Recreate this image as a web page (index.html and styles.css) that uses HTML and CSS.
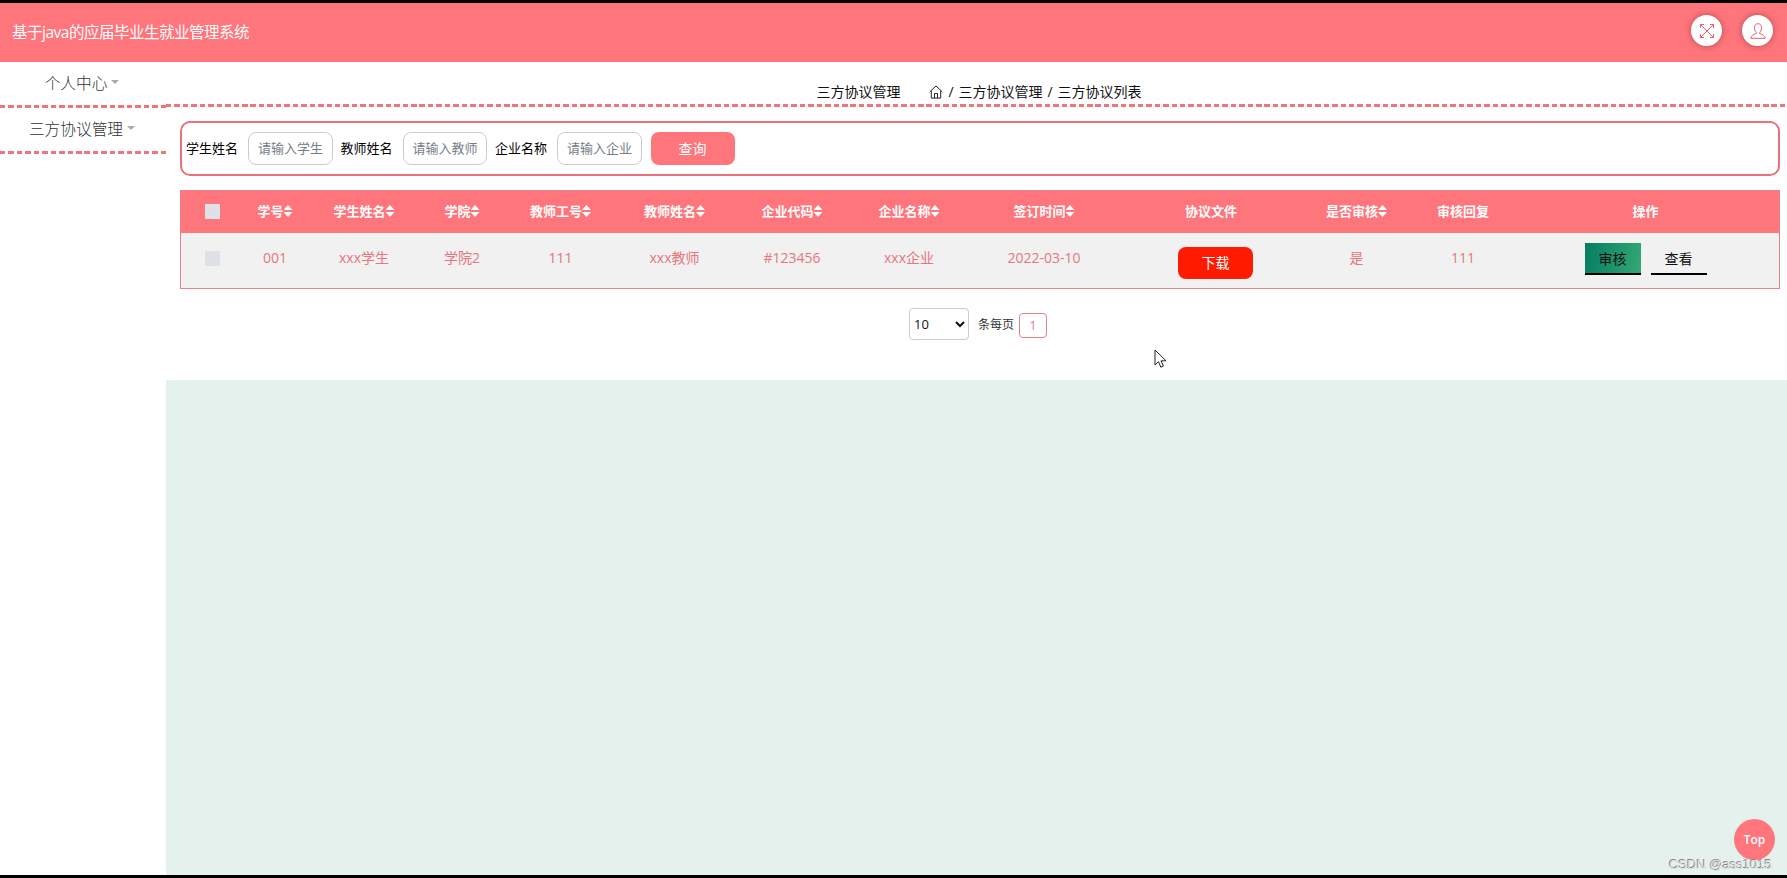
FILE: index.html
```html
<!DOCTYPE html>
<html lang="zh">
<head>
  <meta charset="utf-8">
  <title>三方协议管理</title>
  <link rel="stylesheet" href="styles.css">
</head>
<body>
  <header class="navbar">
    <div class="brand">基于java的应届毕业生就业管理系统</div>
    <div class="nav-icons">
      <a class="nav-icon">
        <svg width="16" height="16" viewBox="0 0 16 16"><path d="M1.5 1.5l13 13M14.5 1.5l-13 13M1.5 5V1.500H5M11 1.500h3.500V5M1.500 11v3.500H5M11 14.500h3.500V11"/></svg>
      </a>
      <a class="nav-icon">
        <svg width="16" height="16" viewBox="0 0 16 16"><path d="M6.300 9.500C4.800 8 4.400 6 4.500 4.300 4.600 2 6 .7 8 .7s3.400 1.300 3.500 3.600c.1 1.700-.3 3.700-1.800 5.200v1.100c2.500.8 5 1.700 5.700 4.700H.6c.7-3 3.200-3.900 5.700-4.700z"/></svg>
      </a>
    </div>
  </header>

  <div class="wrapper">
    <!-- Sidebar -->
    <nav class="sidebar">
      <a class="menu-item">个人中心<span class="caret"></span></a>
      <a class="menu-item">三方协议管理<span class="caret"></span></a>
    </nav>

    <main class="content">
      <div class="panel">
        <div class="breadcrumb">
          <span class="page-title">三方协议管理</span>
          <svg class="home" width="14" height="14" viewBox="0 0 14 14"><path d="M.6 7L7 .9 13.400 7M2.300 5.800v7.300h9.400V5.800M5.500 13V8.500h3V13"/></svg>
          <span class="crumbs">/ 三方协议管理 / 三方协议列表</span>
        </div>

        <!-- Search form -->
        <form class="search-form">
          <label for="student">学生姓名</label>
          <input type="text" id="student" placeholder="请输入学生姓名">
          <label for="teacher">教师姓名</label>
          <input type="text" id="teacher" placeholder="请输入教师姓名">
          <label for="company">企业名称</label>
          <input type="text" id="company" placeholder="请输入企业名称">
          <button type="button">查询</button>
        </form>

        <!-- Data table -->
        <table class="data-table">
          <colgroup>
            <col class="c-check"><col class="c-no"><col class="c-student"><col class="c-college">
            <col class="c-tno"><col class="c-teacher"><col class="c-code"><col class="c-company">
            <col class="c-time"><col class="c-file"><col class="c-audit"><col class="c-reply"><col class="c-action">
          </colgroup>
          <thead>
            <tr>
              <th><span class="check"></span></th>
              <th>学号<i class="sort"></i></th>
              <th>学生姓名<i class="sort"></i></th>
              <th>学院<i class="sort"></i></th>
              <th>教师工号<i class="sort"></i></th>
              <th>教师姓名<i class="sort"></i></th>
              <th>企业代码<i class="sort"></i></th>
              <th>企业名称<i class="sort"></i></th>
              <th>签订时间<i class="sort"></i></th>
              <th>协议文件</th>
              <th>是否审核<i class="sort"></i></th>
              <th>审核回复</th>
              <th>操作</th>
            </tr>
          </thead>
          <tbody>
            <tr>
              <td><span class="check"></span></td>
              <td>001</td>
              <td>xxx学生</td>
              <td>学院2</td>
              <td>111</td>
              <td>xxx教师</td>
              <td>#123456</td>
              <td>xxx企业</td>
              <td>2022-03-10</td>
              <td><button class="btn-download">下载</button></td>
              <td>是</td>
              <td>111</td>
              <td><div class="actions"><button class="btn-audit">审核</button><button class="btn-view">查看</button></div></td>
            </tr>
          </tbody>
        </table>

        <div class="pager">
          <select>
            <option>10</option>
            <option>25</option>
            <option>50</option>
          </select>
          <span class="pager-text">条每页</span>
          <a class="page-link">1</a>
        </div>
      </div>
    </main>
  </div>

  <a class="back-top">Top</a>
  <div class="watermark">CSDN @ass1015</div>
  <svg class="cursor" width="13" height="20" viewBox="0 0 13 20"><path d="M1 1v15l3.500-3.300 2.300 5.500 2.600-1.100L7.100 11.800H12z"/></svg>
</body>
</html>
```
FILE: styles.css
```css
* {
  box-sizing: border-box;
}

body {
  margin: 0;
  height: 878px;
  padding: 3px 0;
  background: #000;
  display: flex;
  flex-direction: column;
  overflow: hidden;
  font-family: "Open Sans", "Noto Sans CJK SC", sans-serif;
  font-size: 14px;
  color: #222;
}

button,
input,
select {
  font-family: inherit;
}

.navbar {
  height: 59px;
  flex: none;
  background: #ff757c;
  display: flex;
  justify-content: space-between;
  padding: 0 14px 0 12px;
}

.brand {
  color: #fff;
  font-size: 15.5px;
  letter-spacing: -.5px;
  line-height: 59px;
}

.nav-icons {
  display: flex;
  gap: 20px;
  padding-top: 12px;
}

.nav-icon {
  width: 31px;
  height: 31px;
  border-radius: 50%;
  background: #fff;
  display: flex;
  align-items: center;
  justify-content: center;
  box-shadow: 0 0 6px rgba(90, 40, 40, .5);
}

.nav-icon svg {
  fill: none;
  stroke: #e5656c;
  stroke-width: 1;
}

.wrapper {
  flex: 1;
  display: flex;
}

.sidebar {
  width: 166px;
  background: #fff;
}

.menu-item {
  height: 46px;
  display: flex;
  justify-content: center;
  align-items: center;
  padding-bottom: 5px;
  font-size: 15.7px;
  font-weight: 300;
  color: #333;
  background: repeating-linear-gradient(90deg, #f0747b 0 5.500px, transparent 5.500px 8.450px) 0 100% / 100% 3px no-repeat;
}

.menu-item .caret {
  margin: 0 2px 2px 4px;
}

.caret {
  border: 4.500px solid transparent;
  border-top-color: #aaa;
  border-bottom: 0;
}

.content {
  flex: 1;
  background: #e4f1ec;
}

.panel {
  height: 318px;
  background: #fff;
}

.breadcrumb {
  height: 45px;
  display: flex;
  justify-content: center;
  align-items: center;
  padding: 14px 0 0 5px;
  line-height: 20px;
  color: #111;
  background: repeating-linear-gradient(90deg, #f0747b 0 5.500px, transparent 5.500px 8.450px) 0 100% / 100% 3px no-repeat;
}

.page-title {
  margin-right: 29px;
}

.crumbs {
  word-spacing: 1.300px;
}

.home {
  fill: none;
  stroke: #222;
  margin-right: 5px;
}

.search-form {
  height: 55px;
  margin: 14px 7px 0 14px;
  border: 2px solid #e8717a;
  border-radius: 10px;
  display: flex;
  align-items: center;
  padding: 0 4px;
}

.search-form label {
  width: 52px;
  font-size: 13px;
  line-height: 18px;
  padding-bottom: 1px;
  color: #000;
  white-space: nowrap;
}

.search-form input {
  width: 84.500px;
  height: 33px;
  margin: 0 8px 0 10px;
  padding: 0 9px 1px;
  border: 1px solid #ccc;
  border-radius: 8px;
  font-size: 13px;
  color: #333;
}

.search-form input::placeholder {
  color: #757e87;
}

.search-form button {
  width: 84px;
  height: 33px;
  padding-bottom: 3px;
  margin-left: 1px;
  border: 0;
  border-radius: 8px;
  background: #ff757c;
  color: #fff;
  font-size: 14px;
}

.data-table {
  width: 1600px;
  margin: 14px 7px 0 14px;
  table-layout: fixed;
  border-collapse: separate;
  border-spacing: 0;
  border: 1px solid #ec8087;
  text-align: center;
}

.c-check { width: 62px; }
.c-no { width: 64px; }
.c-student { width: 114px; }
.c-college { width: 82px; }
.c-tno { width: 115px; }
.c-teacher { width: 113px; }
.c-code { width: 122px; }
.c-company { width: 112px; }
.c-time { width: 158px; }
.c-file { width: 176px; }
.c-audit { width: 115px; }
.c-reply { width: 98px; }

.data-table th {
  height: 42px;
  padding: 0 0 2px;
  background: #ff757c;
  color: #fff;
  font-size: 13px;
  line-height: 20px;
  font-weight: bold;
  white-space: nowrap;
}

.data-table td {
  height: 55px;
  padding: 14px 0 0;
  background: #f1f1f1;
  color: #e8757d;
  font-size: 14px;
  line-height: 22px;
  vertical-align: top;
}

.check {
  display: block;
  width: 15px;
  height: 15px;
  margin: 0 auto;
  background: #dee2e6;
}

td .check {
  margin-top: 4px;
}

.sort {
  display: inline-block;
  width: 9px;
  height: 12px;
  vertical-align: -1px;
  background: #fff;
  clip-path: polygon(50% 0, 100% 42%, 0 42%, 0 58%, 100% 58%, 50% 100%, 0 58%, 0 42%);
}

.btn-download {
  display: block;
  width: 75px;
  height: 32px;
  margin: 0 0 0 55px;
  padding-bottom: 3px;
  border: 0;
  border-radius: 8px;
  background: #ff1a00;
  color: #fff;
  font-size: 14px;
}

.actions {
  display: flex;
  justify-content: center;
  gap: 10px;
  margin-top: -4px;
}

.actions button {
  width: 56px;
  height: 32px;
  padding: 0;
  border: 0;
  border-bottom: 2px solid #000;
  background: none;
  color: #111;
  font-size: 14px;
}

.actions .btn-audit {
  background: linear-gradient(100deg, #047d62, #34a874);
}

.pager {
  display: flex;
  justify-content: center;
  align-items: center;
  margin-top: 19px;
  padding-left: 3px;
}

.pager select {
  width: 60px;
  height: 32px;
  border: 1px solid #ccc;
  border-radius: 4px;
  background-color: #fff;
  color: #111;
  font-size: 13px;
}

.pager-text {
  margin: 0 5px 0 9px;
  font-size: 12px;
  color: #333;
}

.page-link {
  width: 28px;
  height: 25px;
  margin-top: 2px;
  border: 1.500px solid #e5828a;
  border-radius: 4px;
  color: #e8757d;
  font-size: 12px;
  line-height: 23px;
  text-align: center;
}

.back-top {
  position: absolute;
  left: 1734px;
  top: 819px;
  width: 41px;
  height: 41px;
  border-radius: 50%;
  background: #ff757c;
  color: #fff;
  font-size: 12px;
  font-weight: 600;
  line-height: 42px;
  text-align: center;
}

.watermark {
  position: absolute;
  right: 15px;
  bottom: 5px;
  font-family: "Liberation Sans", sans-serif;
  font-size: 13px;
  line-height: 16px;
  color: #ddd;
  text-shadow: -1px -1px 0 #888;
}

.cursor {
  position: absolute;
  left: 1154px;
  top: 349px;
  fill: #fff;
  stroke: #222;
}
```
